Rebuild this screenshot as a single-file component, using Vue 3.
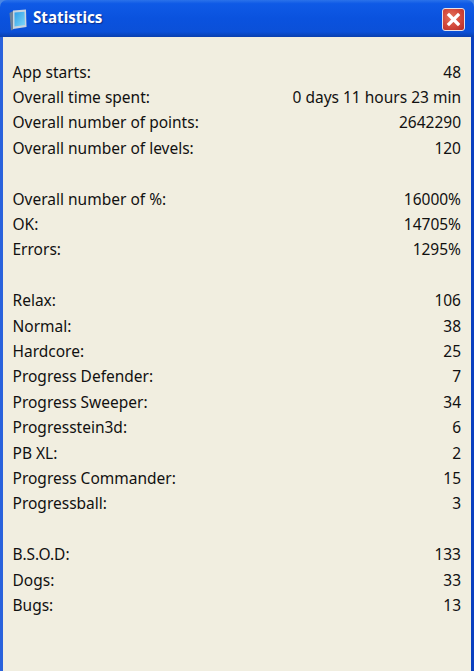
<script setup>
const groups = [
  [['App starts:', '48'], ['Overall time spent:', '0 days 11 hours 23 min'], ['Overall number of points:', '2642290'], ['Overall number of levels:', '120']],
  [['Overall number of %:', '16000%'], ['OK:', '14705%'], ['Errors:', '1295%']],
  [['Relax:', '106'], ['Normal:', '38'], ['Hardcore:', '25'], ['Progress Defender:', '7'], ['Progress Sweeper:', '34'], ['Progresstein3d:', '6'], ['PB XL:', '2'], ['Progress Commander:', '15'], ['Progressball:', '3']],
  [['B.S.O.D:', '133'], ['Dogs:', '33'], ['Bugs:', '13']]
]
</script>

<template>
  <div class="window">
    <header class="titlebar">
      <svg class="appicon" width="18" height="22" viewBox="0 0 18 22">
        <defs>
          <linearGradient id="scr" x1="0" y1="0" x2="1" y2="1">
            <stop offset="0" stop-color="#2f9fe8" />
            <stop offset="1" stop-color="#7fd8f8" />
          </linearGradient>
        </defs>
        <path d="M0.5 4 L5 1.5 L5 20 L2 21.5 Z" fill="#6f8299" />
        <path d="M4 1.5 L17 0.5 L17.5 18 L4 20 Z" fill="#c9d4de" />
        <path d="M5.5 3.5 L15.5 2.8 L16 16 L5.5 17.5 Z" fill="url(#scr)" />
      </svg>
      <span class="title">Statistics</span>
      <span class="close">
        <svg width="15" height="15" viewBox="0 0 15 15">
          <path d="M3 3 L12 12 M12 3 L3 12" stroke="#fff" stroke-width="3.2" stroke-linecap="square" fill="none" />
        </svg>
      </span>
    </header>
    <main class="body">
      <section v-for="(g, i) in groups" :key="i" class="group">
        <div v-for="r in g" :key="r[0]" class="row">
          <span>{{ r[0] }}</span>
          <span>{{ r[1] }}</span>
        </div>
      </section>
    </main>
  </div>
</template>

<style>
html, body { margin: 0; padding: 0; }
</style>

<style scoped>
.window {
  width: 474px;
  height: 671px;
  display: flex;
  flex-direction: column;
  background: #4a86e4;
  overflow: hidden;
  font-family: "Noto Sans", "Open Sans", sans-serif;
}
.titlebar {
  height: 37px;
  flex: none;
  display: flex;
  align-items: center;
  padding: 0 9px 0 9px;
  box-sizing: border-box;
  border-radius: 7px 7px 0 0;
  background: linear-gradient(180deg, #2a72ea 0%, #0f5ae6 10%, #0a52de 50%, #0b50d8 86%, #0a3fae 100%);
}
.appicon { flex: none; margin-top: 2px; }
.title {
  margin-left: 6px;
  margin-top: -3px;
  color: #fff;
  font-size: 15.2px;
  font-weight: 700;
  text-shadow: 1px 1px 1px #0a2f8f;
}
.close {
  margin-left: auto;
  margin-top: 2px;
  width: 23px;
  height: 23px;
  box-sizing: border-box;
  border: 1px solid #e8e2e6;
  border-radius: 3px;
  background: radial-gradient(circle at 40% 40%, #e4735c 0%, #d34a3c 50%, #b52a26 100%);
  display: flex;
  align-items: center;
  justify-content: center;
}
.body {
  flex: 1;
  border-left: 3px solid #2a62dc;
  border-right: 3px solid #0a3fc0;
  background: #f1eee0;
  padding: 22px 10px 0 9.5px;
  display: flex;
  flex-direction: column;
  gap: 25.4px;
  color: #111;
  font-size: 15.5px;
}
.row {
  height: 25.4px;
  display: flex;
  justify-content: space-between;
  align-items: center;
}
</style>
